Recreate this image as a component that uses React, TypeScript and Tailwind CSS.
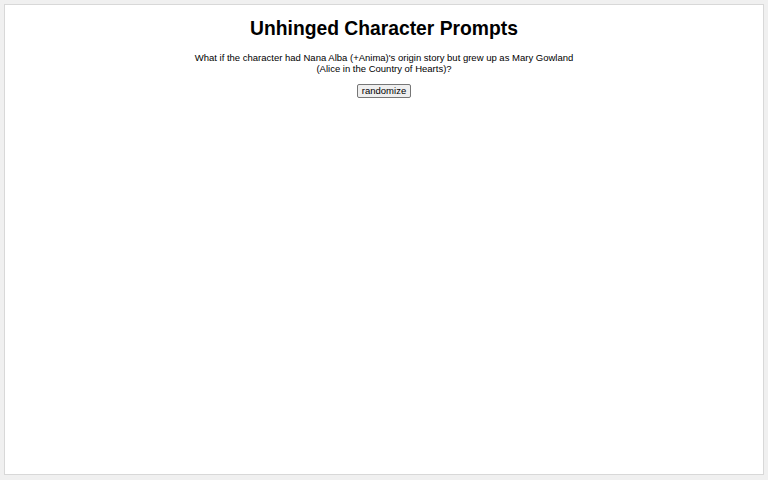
export default function App() {
  return (
    <div className="min-h-screen bg-[#f0f0f0] p-1 font-['Liberation_Sans',Arial,sans-serif]">
      <div className="flex h-[471px] flex-col items-center border border-[#d8d8d8] bg-white pt-[12px] text-black">
        <h1 className="text-[19.3px] font-bold leading-[24px]">Unhinged Character Prompts</h1>
        <p className="mt-[11px] w-[382px] text-center text-[9.5px] leading-[11px]">
          What if the character had Nana Alba (+Anima)'s origin story but grew up as Mary Gowland (Alice in the Country of Hearts)?
        </p>
        <button className="mt-[10px] rounded-[2px] border border-[#767676] bg-[#efefef] px-[4px] text-[9.5px] leading-[12px]">
          randomize
        </button>
      </div>
    </div>
  );
}
